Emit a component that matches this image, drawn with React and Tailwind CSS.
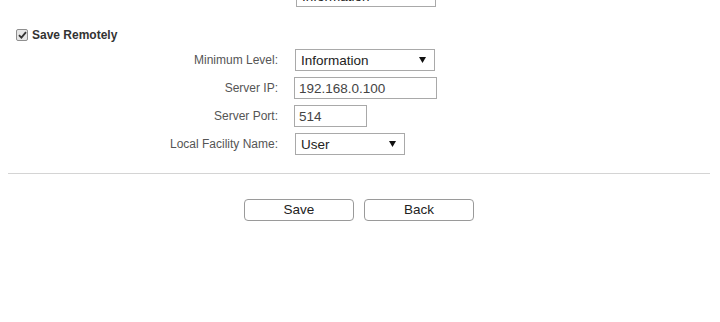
import React from 'react';

const Caret = () => (
  <svg width="7" height="6" viewBox="0 0 7 6" className="shrink-0">
    <path d="M0 0 L7 0 L3.5 6 Z" fill="#111" />
  </svg>
);

const FakeSelect = ({ value, width }) => (
  <div className={`flex items-center justify-between h-[22px] border border-[#a9a9a9] bg-white pl-[5px] pr-[8px] ${width}`}>
    <span className="text-[13.5px] text-[#222] leading-none mt-[2px]">{value}</span>
    <Caret />
  </div>
);

const Row = ({ label, children }) => (
  <div className="flex items-center h-[22px]">
    <div className="w-[279px] text-right pr-[1px] text-[12px] text-[#555]">{label}</div>
    <div className="ml-[16px]">{children}</div>
  </div>
);

const App = () => {
  return (
    <div className="w-[720px] h-[322px] bg-white overflow-hidden font-['Liberation_Sans',Arial,sans-serif]">
      <div className="pl-[296px] -mt-[15px]">
        <FakeSelect value="Information" width="w-[140px]" />
      </div>

      <div className="flex items-center gap-[4px] pl-[16px] mt-[19px]">
        <span className="w-[12px] h-[12px] rounded-[2px] border border-[#8f8f8f] bg-[#e6e6e6] flex items-center justify-center">
          <svg width="9" height="8" viewBox="0 0 9 8">
            <path d="M1 4.2 L3.4 6.6 L8 1.2" stroke="#333" strokeWidth="1.8" fill="none" />
          </svg>
        </span>
        <span className="text-[12px] font-bold text-[#333]">Save Remotely</span>
      </div>

      <div className="flex flex-col gap-[6px] mt-[5px]">
        <Row label="Minimum Level:">
          <FakeSelect value="Information" width="w-[140px]" />
        </Row>
        <Row label="Server IP:">
          <input
            readOnly
            value="192.168.0.100"
            className="-ml-[1px] w-[143px] h-[22px] border border-[#a9a9a9] px-[4px] pt-[2px] text-[13.5px] text-[#444] outline-none"
          />
        </Row>
        <Row label="Server Port:">
          <input
            readOnly
            value="514"
            className="-ml-[1px] w-[73px] h-[22px] border border-[#a9a9a9] px-[4px] pt-[2px] text-[13.5px] text-[#444] outline-none"
          />
        </Row>
        <Row label="Local Facility Name:">
          <FakeSelect value="User" width="w-[110px]" />
        </Row>
      </div>

      <div className="ml-[8px] mr-[10px] mt-[18px] border-t border-[#d4d4d4]" />

      <div className="flex justify-center gap-[10px] mt-[25px] pr-[2px]">
        <button className="w-[110px] h-[22px] rounded-[4px] border border-[#9a9a9a] bg-white text-[13.5px] text-[#222]">
          Save
        </button>
        <button className="w-[110px] h-[22px] rounded-[4px] border border-[#9a9a9a] bg-white text-[13.5px] text-[#222]">
          Back
        </button>
      </div>
    </div>
  );
};

export default App;
